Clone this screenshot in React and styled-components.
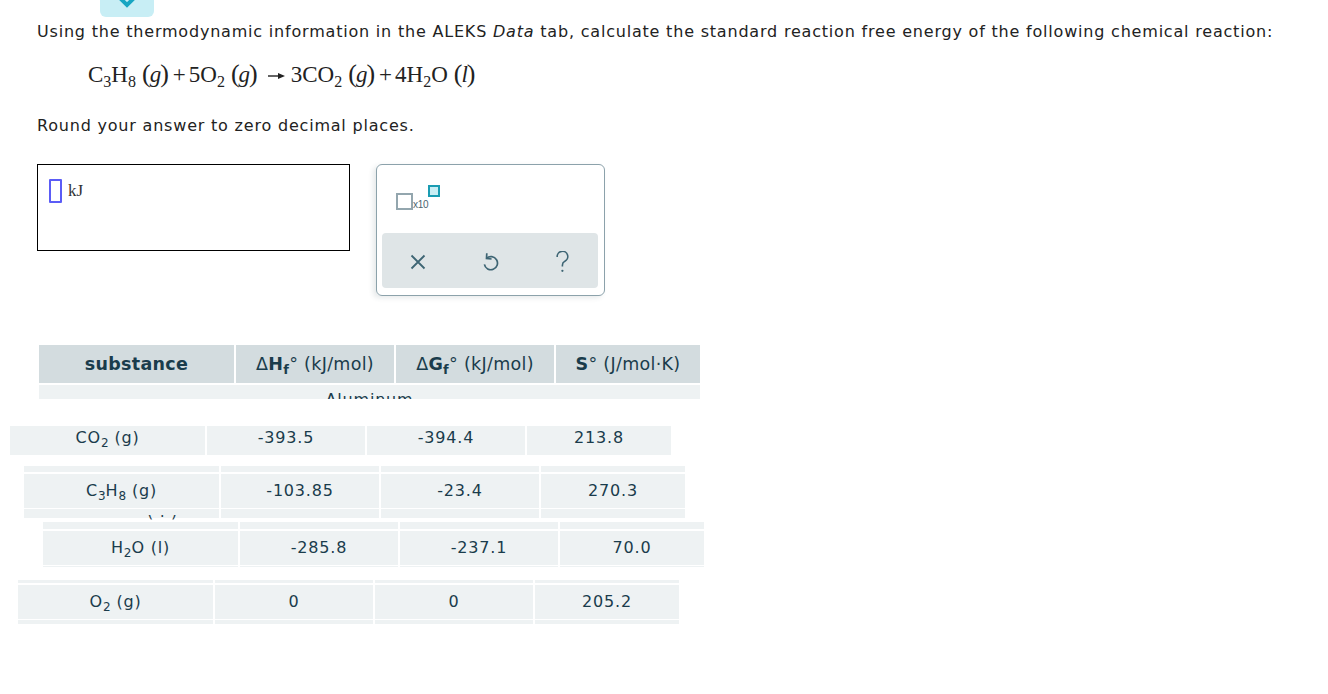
import styled, { createGlobalStyle } from "styled-components";

const GlobalStyle = createGlobalStyle`
  html, body {
    margin: 0;
    background: #ffffff;
  }
  body {
    font-family: "DejaVu Sans", Verdana, sans-serif;
    color: #222222;
  }
`;

const cols = "195px 158px 158px 144px";

const rows = [
  { id: "co2", offset: 10, top: 27, name: ["CO", "2", " (g)"], h: "-393.5", g: "-394.4", s: "213.8", tight: true },
  { id: "c3h8", offset: 24, top: 11, name: ["C", "3", "H", "8", " (g)"], h: "-103.85", g: "-23.4", s: "270.3", before: 6, after: 9 },
  { id: "h2o", offset: 43, top: 4, name: ["H", "2", "O (l)"], h: "-285.8", g: "-237.1", s: "70.0", before: 7, after: 1, ghost: true },
  { id: "o2", offset: 18, top: 13, name: ["O", "2", " (g)"], h: "0", g: "0", s: "205.2", before: 3, after: 4 },
];

function Formula({ parts }) {
  // odd indexes are subscripts
  return (
    <span>
      {parts.map((p, i) => (i % 2 ? <Sub key={i}>{p}</Sub> : <span key={i}>{p}</span>))}
    </span>
  );
}

function Phase({ children }) {
  return (
    <PhaseWrap>
      <Paren $open>(</Paren>
      <i>{children}</i>
      <Paren>)</Paren>
    </PhaseWrap>
  );
}

export default function App() {
  return (
    <Page>
      <GlobalStyle />
      <TopTab>
        <svg width="18" height="9" viewBox="0 0 18 9">
          <polyline points="1,-3 9,5 17,-3" fill="none" stroke="#17a6c2" strokeWidth="4" />
        </svg>
      </TopTab>

      <Question>
        Using the thermodynamic information in the ALEKS <em>Data</em> tab, calculate the standard reaction free energy of the following chemical reaction:
      </Question>

      <Equation>
        C<ESub>3</ESub>H<ESub>8</ESub>
        <Phase>g</Phase>
        <Op>+</Op>5O<ESub>2</ESub>
        <Phase>g</Phase>
        <Arrow>
          <svg width="17" height="8" viewBox="0 0 17 8">
            <line x1="0" y1="4" x2="11" y2="4" stroke="#222" strokeWidth="1.4" />
            <polygon points="10,1 17,4 10,7" fill="#222" />
          </svg>
        </Arrow>
        3CO<ESub>2</ESub>
        <Phase>g</Phase>
        <Op>+</Op>4H<ESub>2</ESub>O
        <Phase>l</Phase>
      </Equation>

      <Note>Round your answer to zero decimal places.</Note>

      <AnswerRow>
        <AnswerBox>
          <Caret />
          <Unit>kJ</Unit>
        </AnswerBox>
        <Keypad>
          <KeyTop>
            <SciBase />
            <SciTen>x10</SciTen>
            <SciPower />
          </KeyTop>
          <KeyBar>
            <KeyButton aria-label="clear">
              <svg width="16" height="16" viewBox="0 0 16 16">
                <path d="M1.5 1.5 L14.5 14.5 M14.5 1.5 L1.5 14.5" stroke="#3e6574" strokeWidth="1.8" fill="none" />
              </svg>
            </KeyButton>
            <KeyButton aria-label="undo">
              <svg width="17" height="20" viewBox="0 0 17 20">
                <path d="M4.5 6.2 A6.6 6.6 0 1 1 2.4 12.4" stroke="#3e6574" strokeWidth="1.7" fill="none" />
                <path d="M4.8 1.2 L4.5 6.4 L9.6 7" stroke="#3e6574" strokeWidth="1.7" fill="none" />
              </svg>
            </KeyButton>
            <KeyButton aria-label="help">
              <svg width="13" height="22" viewBox="0 0 13 22">
                <path d="M1.2 6 A5.3 5.3 0 1 1 8.6 10.4 C7 11.3 6.4 12.3 6.4 14.2 L6.4 15.6" stroke="#3e6574" strokeWidth="1.6" fill="none" />
                <circle cx="6.4" cy="19.8" r="1.15" fill="#3e6574" />
              </svg>
            </KeyButton>
          </KeyBar>
        </Keypad>
      </AnswerRow>

      <Strip $offset={39} $top={49}>
        <Row>
          <HeadCell><b>substance</b></HeadCell>
          <HeadCell>
            <span>Δ<b>H<HeadSub>f</HeadSub></b>° (kJ/mol)</span>
          </HeadCell>
          <HeadCell>
            <span>Δ<b>G<HeadSub>f</HeadSub></b>° (kJ/mol)</span>
          </HeadCell>
          <HeadCell>
            <span><b>S</b>° (J/mol·K)</span>
          </HeadCell>
        </Row>
        <GroupRow>Aluminum</GroupRow>
      </Strip>

      {rows.map((r) => (
        <Strip key={r.id} $offset={r.offset} $top={r.top}>
          {r.ghost && (
            <Ghost>
              <span>( l )</span>
            </Ghost>
          )}
          {r.before && (
            <Row>
              <Sliver $h={r.before} />
              <Sliver $h={r.before} />
              <Sliver $h={r.before} />
              <Sliver $h={r.before} />
            </Row>
          )}
          <Row>
            <Cell $tight={r.tight}>
              <Formula parts={r.name} />
            </Cell>
            <Cell $tight={r.tight}><span>{r.h}</span></Cell>
            <Cell $tight={r.tight}><span>{r.g}</span></Cell>
            <Cell $tight={r.tight}><span>{r.s}</span></Cell>
          </Row>
          {r.after && (
            <Row $gap={1}>
              <Sliver $h={r.after} />
              <Sliver $h={r.after} />
              <Sliver $h={r.after} />
              <Sliver $h={r.after} />
            </Row>
          )}
        </Strip>
      ))}
    </Page>
  );
}

const Page = styled.div`
  width: 1328px;
  min-height: 694px;
  font-size: 16px;
`;

const TopTab = styled.div`
  margin-left: 100px;
  width: 54px;
  height: 17px;
  background: #c8eef5;
  border-radius: 0 0 6px 6px;
  display: flex;
  justify-content: center;
  svg {
    display: block;
  }
`;

const Question = styled.p`
  margin: 6px 0 0 37px;
  line-height: 18px;
  letter-spacing: 0.8px;
  white-space: nowrap;
  color: #222;
`;

const Equation = styled.div`
  margin: 16px 0 0 88px;
  height: 34px;
  font-family: "Liberation Serif", "Times New Roman", serif;
  font-size: 23px;
  line-height: 34px;
  color: #222;
  white-space: nowrap;
`;

const ESub = styled.sub`
  font-size: 16px;
  vertical-align: -5px;
  line-height: 0;
`;

const PhaseWrap = styled.span`
  margin-left: 6px;
  i {
    font-style: italic;
  }
`;

const Paren = styled.span`
  font-size: 26px;
  margin: ${(p) => (p.$open ? "0 -1px 0 0" : "0 0 0 -1px")};
`;

const Op = styled.span`
  margin: 0 3px 0 4px;
`;

const Arrow = styled.span`
  display: inline-block;
  margin: 0 6px 0 10px;
  vertical-align: 2px;
  svg {
    display: block;
  }
`;

const Note = styled.p`
  margin: 26px 0 0 37px;
  line-height: 18px;
  letter-spacing: 0.8px;
  color: #222;
`;

const AnswerRow = styled.div`
  margin: 29px 0 0 37px;
  display: flex;
  align-items: flex-start;
  gap: 26px;
`;

const AnswerBox = styled.div`
  box-sizing: border-box;
  width: 313px;
  height: 87px;
  border: 1px solid #000;
  padding: 14px 0 0 11px;
  display: flex;
  align-items: flex-start;
  gap: 6px;
`;

const Caret = styled.span`
  box-sizing: border-box;
  width: 13px;
  height: 24px;
  border: 2px solid #5b5cf6;
  border-radius: 1px;
`;

const Unit = styled.span`
  font-family: "Liberation Serif", "Times New Roman", serif;
  font-size: 17px;
  line-height: 20px;
  color: #333;
  margin-top: 2px;
`;

const Keypad = styled.div`
  box-sizing: border-box;
  width: 229px;
  height: 132px;
  border: 1px solid #8ca2ab;
  border-radius: 6px;
  box-shadow: -3px 2px 5px rgba(60, 80, 90, 0.12);
  padding: 0 6px 7px 5px;
  display: flex;
  flex-direction: column;
  justify-content: space-between;
`;

const KeyTop = styled.div`
  height: 68px;
  padding: 20px 0 0 14px;
  box-sizing: border-box;
  display: flex;
  align-items: flex-start;
`;

const SciBase = styled.span`
  box-sizing: border-box;
  width: 17px;
  height: 17px;
  margin-top: 8px;
  border: 2px solid #93a6ae;
`;

const SciTen = styled.span`
  font-family: "Liberation Sans", Arial, sans-serif;
  font-size: 10px;
  line-height: 10px;
  color: #4b6571;
  margin: 15px 0 0 0;
  letter-spacing: -0.3px;
`;

const SciPower = styled.span`
  box-sizing: border-box;
  width: 12px;
  height: 12px;
  border: 2px solid #1a9cb2;
  background: #c9eef4;
`;

const KeyBar = styled.div`
  height: 55px;
  background: #dfe5e7;
  border-radius: 4px;
  display: grid;
  grid-template-columns: repeat(3, 1fr);
  align-items: center;
  justify-items: center;
`;

const KeyButton = styled.span`
  display: flex;
  align-items: center;
  justify-content: center;
  padding-top: 3px;
  svg {
    display: block;
  }
`;

const Strip = styled.div`
  position: relative;
  margin: ${(p) => p.$top}px 0 0 ${(p) => p.$offset}px;
  width: 661px;
  display: flex;
  flex-direction: column;
  gap: 2px;
  color: #1a3c4c;
`;

const Row = styled.div`
  display: grid;
  grid-template-columns: ${cols};
  column-gap: 2px;
  margin-top: ${(p) => (p.$gap ? p.$gap - 2 : 0)}px;
`;

const HeadCell = styled.div`
  height: 38px;
  background: #d3dcdf;
  display: flex;
  align-items: center;
  justify-content: center;
  font-size: 17.5px;
  letter-spacing: 0.3px;
  line-height: 20px;
  white-space: nowrap;
  color: #1a3c4c;
`;

const HeadSub = styled.sub`
  font-size: 13px;
  vertical-align: -4px;
  line-height: 0;
`;

const GroupRow = styled.div`
  height: 14px;
  overflow: hidden;
  background: #eef2f3;
  box-sizing: border-box;
  padding-top: 6px;
  line-height: 18px;
  letter-spacing: 0.8px;
  text-align: center;
`;

const Cell = styled.div`
  box-sizing: border-box;
  height: ${(p) => (p.$tight ? 29 : 34)}px;
  background: #eef2f3;
  display: flex;
  align-items: ${(p) => (p.$tight ? "flex-start" : "center")};
  justify-content: center;
  padding-top: ${(p) => (p.$tight ? 3 : 0)}px;
  line-height: 18px;
  letter-spacing: 0.8px;
  white-space: pre;
`;

const Sub = styled.sub`
  font-size: 12px;
  vertical-align: -4px;
  line-height: 0;
  letter-spacing: 0;
`;

const Sliver = styled.div`
  height: ${(p) => p.$h}px;
  background: #eef2f3;
`;

const Ghost = styled.div`
  position: absolute;
  top: -7px;
  left: 104px;
  height: 6px;
  overflow: hidden;
  line-height: 18px;
  letter-spacing: 0.8px;
  white-space: pre;
  span {
    display: block;
    margin-top: -12px;
  }
`;
